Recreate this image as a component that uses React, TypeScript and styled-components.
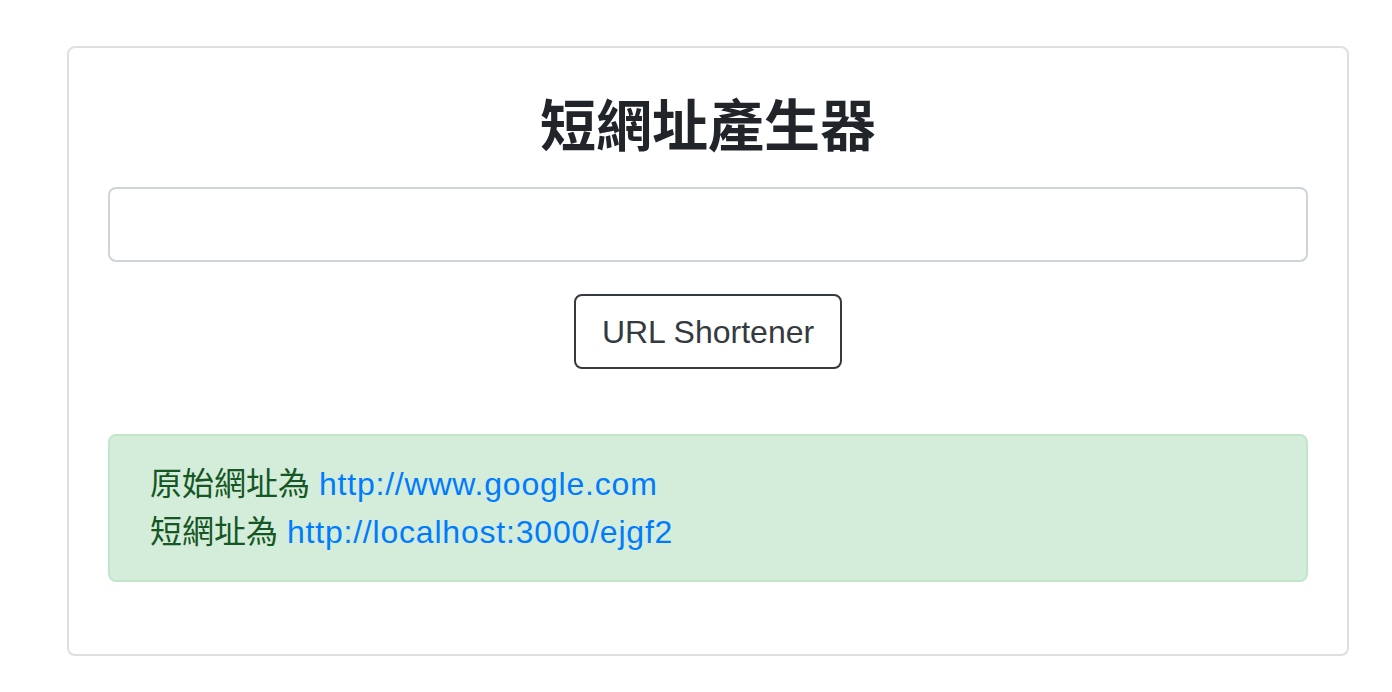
import React, { useState } from "react";
import styled, { createGlobalStyle } from "styled-components";

const GlobalStyle = createGlobalStyle`
    * {
        box-sizing: border-box;
    }
    body {
        margin: 0;
        background: #ffffff;
        font-family: "Liberation Sans", "Noto Sans CJK TC", sans-serif;
        color: #212529;
    }
`;

const Page = styled.div`
    padding: 46px 0 0 67px;
`;

const Card = styled.div`
    width: 1282px;
    display: flex;
    flex-direction: column;
    padding: 40px 39px;
    border: 2px solid #dfdfdf;
    border-radius: 8px;
    background: #ffffff;
`;

const Title = styled.h3`
    margin: 0 0 32px;
    font-family: "Noto Sans CJK TC", sans-serif;
    font-size: 56px;
    font-weight: 700;
    line-height: 67px;
    text-align: center;
    color: #212529;
`;

const UrlInput = styled.input`
    display: block;
    width: 100%;
    height: 75px;
    margin: 0 0 32px;
    padding: 12px 24px;
    font-family: inherit;
    font-size: 32px;
    color: #495057;
    border: 2px solid #ced4da;
    border-radius: 8px;
    background: #ffffff;
    outline: none;
`;

const OutlineButton = styled.button`
    align-self: center;
    height: 75px;
    padding: 0 26px;
    font-family: "Liberation Sans", sans-serif;
    font-size: 32px;
    line-height: 48px;
    color: #343a40;
    background: transparent;
    border: 2px solid #343a40;
    border-radius: 8px;
    cursor: pointer;
`;

const Alert = styled.div`
    margin: 65px 0 32px;
    padding: 24px 40px;
    font-size: 32px;
    line-height: 48px;
    color: #155724;
    background: #d4edda;
    border: 2px solid #c3e6cb;
    border-radius: 8px;
`;

const Line = styled.div`
    height: 48px;
    white-space: nowrap;
`;

const Label = styled.span`
    font-family: "Noto Sans CJK TC", sans-serif;
    line-height: 1;
`;

const Link = styled.a`
    color: #007bff;
    letter-spacing: 0.8px;
    text-decoration: none;
`;

const App = () => {
    const [url, setUrl] = useState("");

    return (
        <>
            <GlobalStyle />
            <Page>
                <Card>
                    <Title>短網址產生器</Title>
                    <UrlInput value={url} onChange={(e) => setUrl(e.target.value)} />
                    <OutlineButton>URL Shortener</OutlineButton>
                    <Alert>
                        <Line>
                            <Label>原始網址為</Label> <Link href="#">http://www.google.com</Link>
                        </Line>
                        <Line>
                            <Label>短網址為</Label> <Link href="#">http://localhost:3000/ejgf2</Link>
                        </Line>
                    </Alert>
                </Card>
            </Page>
        </>
    );
};

export default App;
